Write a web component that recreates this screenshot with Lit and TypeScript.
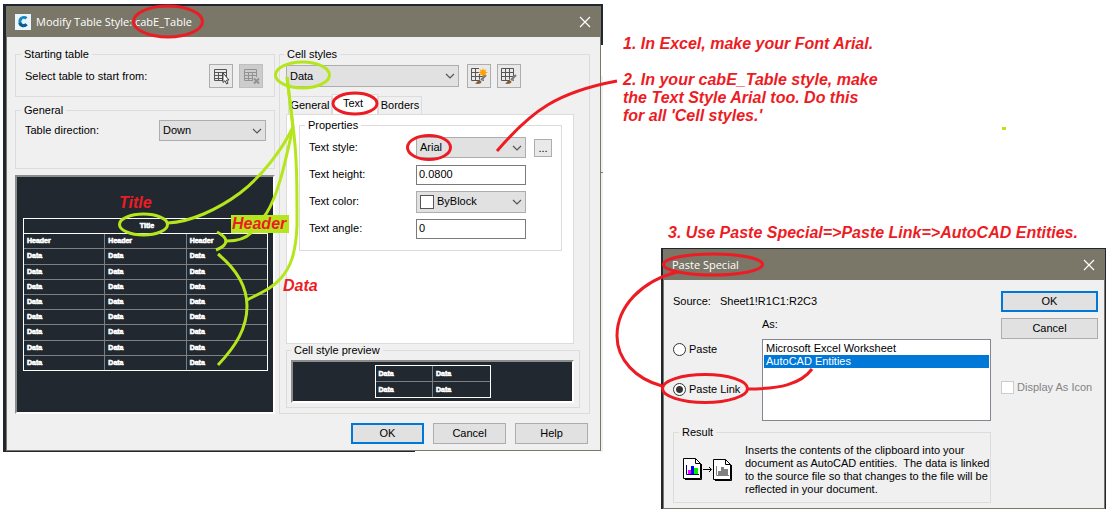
import { LitElement, html, css, svg } from "lit";
import { customElement } from "lit/decorators.js";

const chevron = html`<svg class="chevron" viewBox="0 0 10 6" width="10" height="6" aria-hidden="true">
  <path d="M1 1 L5 5 L9 1" fill="none" stroke="#555" stroke-width="1.2" />
</svg>`;

const closeIcon = html`<svg viewBox="0 0 12 12" width="12" height="12" aria-hidden="true">
  <path d="M1 1 L11 11 M11 1 L1 11" fill="none" stroke="#fff" stroke-width="1.2" />
</svg>`;

const gridLines = svg`<path d="M.5 .5 H12.5 V12.5 H.5 Z M.5 4.5 H12.5 M.5 8.5 H12.5 M4.5 .5 V12.5 M8.5 .5 V12.5"
  fill="none" stroke="currentColor" />`;

const brush = svg`<g>
  <path d="M8 12 L15 6 V9 L10 14 Z" fill="#e1e1e1" />
  <path d="M10 12 L15 7" stroke="#777" stroke-width="2" fill="none" />
  <path d="M4 15.5 C6 15 6 12.5 8.5 12 L10.5 13.8 C10 16 7 16.5 4 15.5 Z" fill="#8a5a2e" />
</g>`;

@customElement("app-root")
export class AppRoot extends LitElement {
  static styles = css`
    :host {
      display: block;
      position: relative;
      min-height: 100vh;
      overflow: hidden;
      background: #fff;
      color: #000;
      font: 11px/13px "Liberation Sans", Arial, sans-serif;
    }
    * { box-sizing: border-box; }
    button, select, input { font: inherit; color: inherit; margin: 0; border-radius: 0; }
    .page {
      display: grid;
      grid-template-columns: minmax(0, 603px) minmax(0, 1fr);
      align-items: start;
    }
    .frame-main {
      margin: 4px 0 0 3px;
      padding: 2px 2px 1px 3px;
      background:
        linear-gradient(#20272f, #20272f) right top / 2px 41px no-repeat,
        linear-gradient(#7a7668, #7a7668) right 168px / 2px 1px no-repeat,
        linear-gradient(transparent 72px, #f0f0f0 72px) right top / 2px 100% no-repeat,
        linear-gradient(#20272f, #20272f) left top / 3px 100% no-repeat,
        linear-gradient(#20272f, #20272f) left top / 100% 2px no-repeat,
        linear-gradient(#20272f, #20272f) left bottom / 412px 1px no-repeat;
    }
    .frame-paste { margin: 6px 0 0 58px; padding: 1px 1px 0 2px; background: #20272f; }
    .window { border: 1px solid #7a7668; background: #f0f0f0; }
    .titlebar {
      display: flex;
      align-items: center;
      height: 30px;
      padding: 0 9px 0 8px;
      background: #7a7668;
      color: #fff;
      font: 11px/16px "Open Sans", "Noto Sans", sans-serif;
    }
    .titlebar h1 { margin: 0; font: inherit; flex: 1; }
    .titlebar .app { margin-right: 5px; display: block; }
    .close { border: 0; background: none; padding: 0; width: 12px; height: 12px; display: block; }
    .body { padding: 11px 10px 6px 8px; }
    .columns { display: grid; grid-template-columns: 260px minmax(0, 1fr); gap: 4px; }
    .left { display: flex; flex-direction: column; }
    fieldset { margin: 0; min-width: 0; border: 1px solid #dcdcdc; padding: 3px 8px 8px 9px; }
    legend { padding: 0 3px; margin-left: -4px; line-height: 13px; }
    .line { display: flex; align-items: center; }
    .grow { flex: 1; }
    .starting { padding-right: 11px; }
    .general { height: 65px; margin: 7px 0 6px; }
    .tool {
      width: 24px; height: 24px; padding: 0;
      border: 1px solid #adadad; background: #e9e9e9; color: #555;
      display: grid; place-items: center;
    }
    .tool + .tool { margin-left: 6px; }
    .tool:disabled { background: #cccccc; color: #929292; border-color: #bfbfbf; }
    .combo { position: relative; display: flex; align-items: center; }
    .combo select {
      appearance: none; width: 100%; height: 21px; padding: 0 18px 0 3px;
      border: 1px solid #adadad; background: #e1e1e1;
    }
    .combo .chevron { position: absolute; right: 4px; top: 8px; pointer-events: none; }
    .combo .swatch {
      position: absolute; left: 4px; top: 4px; width: 14px; height: 14px;
      border: 1px solid #555; background: #fff;
    }
    .combo.color select { height: 22px; padding-left: 20px; }
    .combo.direction { width: 107px; }
    .combo.cell { width: 173px; margin-right: 8px; }
    .combo.cell select { height: 22px; }
    .text {
      width: 100%; height: 20px; padding: 0 2px 1px;
      border: 1px solid #7a7a7a; background: #fff;
    }
    .preview {
      flex: 1; background: #212830; border: 2px solid; color: #fff;
      border-color: #8c8c8c #fff #fff #8c8c8c;
      padding: 41px 5px 0 6px;
    }
    .preview table, .mini table {
      width: 100%; border-collapse: collapse; table-layout: fixed;
      outline: 1px solid #fff; outline-offset: -1px;
      font-size: 7px; line-height: 8px; font-weight: bold;
      -webkit-text-stroke: 0.6px #fff; color: #fff;
    }
    .preview table { height: 153px; }
    td, th { border: 1px solid #7d8083; padding: 0 0 0 3px; height: 15px; text-align: left; }
    th.title { text-align: center; border-color: #fff; }
    .styles { padding: 3px 9px 5px 6px; }
    .styles > legend { margin-left: -2px; }
    .tabs { display: flex; align-items: flex-end; margin: 6px 0 0 2px; }
    .tab {
      height: 18px; width: 44px; padding: 0 0 1px; text-align: center; white-space: nowrap;
      border: 1px solid #dcdcdc; border-bottom: 0; background: #f0f0f0;
    }
    .tab.on { width: 46px; height: 20px; padding: 0 10px 2px 6px; background: #fff; }
    .sheet {
      margin-right: 6px; height: 230px; padding: 4px 11px 0 12px;
      border: 1px solid #dcdcdc; background: #fff;
    }
    .props { padding: 2px 9px 8px; }
    .fields {
      display: grid; grid-template-columns: 107px 110px 26px; grid-auto-rows: 27px;
      align-items: center;
    }
    .fields label { grid-column: 1; }
    .fields .more { margin-left: 8px; }
    .more {
      width: 18px; height: 18px; padding: 0; line-height: 12px;
      border: 1px solid #adadad; background: #e9e9e9;
    }
    .sample { padding: 3px 5px 4px 4px; }
    .sample > legend { margin-left: 0; }
    .mini {
      height: 43px; padding: 3px 0; background: #212830; border: 2px solid;
      border-color: #8c8c8c #fff #fff #8c8c8c;
    }
    .mini table { width: 116px; margin: 0 auto; }
    .mini td { height: 16px; }
    .buttons { display: flex; justify-content: flex-end; gap: 9px; padding: 9px 2px 0 0; }
    .btn {
      width: 73px; height: 21px; padding: 0;
      border: 1px solid #adadad; background: #e1e1e1; text-align: center;
    }
    .btn.primary { border: 2px solid #0078d7; }
    .side { padding-top: 35px; }
    .note { margin: 0 0 18px 20px; }
    .note, .mark {
      font-size: 16px; line-height: 18px; font-weight: bold; font-style: italic; color: #ed1c24;
    }
    .note.third { margin: 99px 0 0 65px; }
    .paste {
      display: grid; grid-template-columns: minmax(0, 1fr) 97px; column-gap: 10px;
      padding: 11px 6px 5px 9px;
    }
    .paste-left { display: flex; flex-direction: column; }
    .paste-right { display: flex; flex-direction: column; gap: 6px; }
    .paste-right .btn { width: 100%; }
    .source { display: flex; margin: 4px 0 10px; gap: 9px; }
    .choice { display: grid; grid-template-columns: 89px minmax(0, 1fr); }
    .radios { display: flex; flex-direction: column; gap: 27px; padding-top: 25px; }
    .check { display: flex; align-items: center; gap: 3px; white-space: nowrap; }
    .check input[type="radio"] {
      appearance: none; width: 13px; height: 13px; border: 1px solid #333;
      border-radius: 50%; background: #fff;
    }
    .check input[type="radio"]:checked {
      background: radial-gradient(circle, #333 0 3px, #fff 4px);
    }
    .check.off { color: #838383; margin-top: 36px; }
    .check.off input {
      appearance: none; width: 13px; height: 13px; border: 1px solid #ccc; background: #fff;
    }
    .list {
      display: block; width: 100%; height: 82px; margin-top: 8px; padding: 2px 1px;
      border: 1px solid #828790; background: #fff; overflow: hidden; outline: 0;
    }
    .list option { padding: 0 2px; min-height: 13px; height: 13px; line-height: 13px; }
    .list option:checked { background: #0078d7 linear-gradient(#0078d7, #0078d7); color: #fff; }
    .result { margin-top: 5px; padding: 5px 4px 6px 9px; }
    .result .line { gap: 13px; white-space: nowrap; }
    .result svg { flex: none; }
    .result p { margin: 0; }
    .marks { position: absolute; left: 0; top: 0; pointer-events: none; }
    .mark { position: absolute; padding: 0 1px; }
    .mark.m-title { left: 118px; top: 194px; }
    .mark.m-header { left: 231px; top: 215px; background: #b5e61d; padding-right: 3px; }
    .mark.m-data { left: 282px; top: 277px; }
  `;

  private renderSamples() {
    const cols = [0, 1, 2];
    return html`<table>
      <tr><th class="title" colspan="3">Title</th></tr>
      <tr>${cols.map(() => html`<th>Header</th>`)}</tr>
      ${Array.from({ length: 8 }, () => html`<tr>${cols.map(() => html`<td>Data</td>`)}</tr>`)}
    </table>`;
  }

  private renderTableStyle() {
    return html`<div class="frame-main"><section class="window">
      <header class="titlebar">
        <svg class="app" viewBox="0 0 16 16" width="16" height="16" aria-hidden="true">
          <rect width="16" height="16" fill="#eaf6fc" />
          <path d="M11.5 4.4 A4 4 0 1 0 11.5 10.4" fill="none" stroke="#1b86bb" stroke-width="3" />
          <path d="M4.6 9 A4 4 0 0 0 11.5 10.4" fill="none" stroke="#0f5c8c" stroke-width="3" />
        </svg>
        <h1>Modify Table Style: cabE_Table</h1>
        <button class="close" aria-label="Close">${closeIcon}</button>
      </header>
      <div class="body">
        <div class="columns">
          <div class="left">
            <fieldset class="starting">
              <legend>Starting table</legend>
              <div class="line">
                <span class="grow">Select table to start from:</span>
                <button class="tool" aria-label="Select table">
                  <svg viewBox="0 0 17 17" width="17" height="17">
                    <path d="M1.5 1.5 H13.5 V12.5 H1.5 Z M1.5 4.5 H13.5 M1.5 7.5 H13.5 M1.5 10.5 H13.5 M5.5 4.5 V12.5 M9.5 4.5 V12.5" fill="none" stroke="currentColor" />
                    <path d="M10 5 V14.5 L12 12.7 L13.6 16 L15 15.3 L13.5 12 H16 Z" fill="#fff" stroke="#333" stroke-width=".9" />
                  </svg>
                </button>
                <button class="tool" aria-label="Remove table" disabled>
                  <svg viewBox="0 0 17 17" width="17" height="17">
                    <path d="M1.5 1.5 H13.5 V12.5 H1.5 Z M1.5 4.5 H13.5 M1.5 7.5 H13.5 M1.5 10.5 H13.5 M5.5 4.5 V12.5 M9.5 4.5 V12.5" fill="none" stroke="currentColor" />
                    <path d="M10 9 H17 V17 H10 Z" fill="#ccc" />
                    <path d="M11 10.5 L16 15.5 M16 10.5 L11 15.5" stroke="currentColor" stroke-width="2" />
                  </svg>
                </button>
              </div>
            </fieldset>
            <fieldset class="general">
              <legend>General</legend>
              <div class="line">
                <label class="grow" for="direction">Table direction:</label>
                <div class="combo direction">
                  <select id="direction"><option>Down</option><option>Up</option></select>${chevron}
                </div>
              </div>
            </fieldset>
            <div class="preview">${this.renderSamples()}</div>
          </div>
          <fieldset class="styles">
            <legend>Cell styles</legend>
            <div class="line">
              <div class="combo cell">
                <select aria-label="Cell styles"><option>Data</option><option>Header</option><option>Title</option></select>${chevron}
              </div>
              <button class="tool" aria-label="Create cell style">
                <svg viewBox="0 0 17 17" width="17" height="17">${gridLines}${brush}
                  <rect x="8" y="0" width="9" height="6" fill="#e9e9e9" />
                  <path d="M12 0 L13 2.4 L15.5 1 L14.3 3.4 L17 4.4 L14.3 5.4 L15.5 8 L13 6.6 L12 9 L11 6.6 L8.5 8 L9.7 5.4 L7 4.4 L9.7 3.4 L8.5 1 L11 2.4 Z" fill="#ffa000" />
                </svg>
              </button>
              <button class="tool" aria-label="Manage cell styles">
                <svg viewBox="0 0 17 17" width="17" height="17">${gridLines}${brush}</svg>
              </button>
            </div>
            <div class="tabs" role="tablist">
              <button class="tab" role="tab">General</button>
              <button class="tab on" role="tab" aria-selected="true">Text</button>
              <button class="tab" role="tab">Borders</button>
            </div>
            <div class="sheet" role="tabpanel">
              <fieldset class="props">
                <legend>Properties</legend>
                <div class="fields">
                  <label for="style">Text style:</label>
                  <div class="combo"><select id="style"><option>Arial</option></select>${chevron}</div>
                  <button class="more" aria-label="Edit text style">...</button>
                  <label for="height">Text height:</label>
                  <input class="text" id="height" value="0.0800" />
                  <label for="color">Text color:</label>
                  <div class="combo color">
                    <select id="color"><option>ByBlock</option></select>
                    <span class="swatch"></span>${chevron}
                  </div>
                  <label for="angle">Text angle:</label>
                  <input class="text" id="angle" value="0" />
                </div>
              </fieldset>
            </div>
            <fieldset class="sample">
              <legend>Cell style preview</legend>
              <div class="mini"><table>
                <tr><td>Data</td><td>Data</td></tr>
                <tr><td>Data</td><td>Data</td></tr>
              </table></div>
            </fieldset>
          </fieldset>
        </div>
        <div class="buttons">
          <button class="btn primary">OK</button>
          <button class="btn">Cancel</button>
          <button class="btn">Help</button>
        </div>
      </div>
    </section></div>`;
  }

  private renderPasteSpecial() {
    return html`<div class="frame-paste"><section class="window">
      <header class="titlebar">
        <h1>Paste Special</h1>
        <button class="close" aria-label="Close">${closeIcon}</button>
      </header>
      <div class="paste">
        <div class="paste-left">
          <div class="source"><span>Source:</span><span>Sheet1!R1C1:R2C3</span></div>
          <div class="choice">
            <div class="radios">
              <label class="check"><input type="radio" name="mode" />Paste</label>
              <label class="check"><input type="radio" name="mode" checked />Paste Link</label>
            </div>
            <div>
              <label for="as">As:</label>
              <select class="list" id="as" size="6">
                <option>Microsoft Excel Worksheet</option>
                <option selected>AutoCAD Entities</option>
              </select>
            </div>
          </div>
          <fieldset class="result">
            <legend>Result</legend>
            <div class="line">
              <svg viewBox="0 0 49 24" width="49" height="24" aria-hidden="true">
                <path d="M.5 .5 H12.5 L17.5 5.5 V20.5 H.5 Z" fill="#fff" stroke="#000" />
                <path d="M12.5 .5 V5.5 H17.5 M2 21.5 H18.5 V6" fill="none" stroke="#000" />
                <path d="M3.5 7 V16.500 H16" fill="none" stroke="#000080" />
                <path d="M5 12 H8 V16 H5 Z" fill="#f0f" />
                <path d="M8 8 H11 V16 H8 Z" fill="#00f" />
                <path d="M11 10 H15 V16 H11 Z" fill="#0e0" />
                <path d="M20 11.500 H28 M26 9 L28.5 11.500 L26 14" fill="none" stroke="#000" />
                <path d="M30.5 1.5 H42.5 L47.5 6.5 V21.5 H30.5 Z" fill="#fff" stroke="#000" />
                <path d="M42.5 1.5 V6.5 H47.5 M32 22.500 H48.5 V7" fill="none" stroke="#000" />
                <path d="M33.5 8 V17.500 H46" fill="none" stroke="#808080" />
                <path d="M35 13 H38 V9 H41 V11 H45 V17 H35 Z" fill="#808080" />
              </svg>
              <p>Inserts the contents of the clipboard into your<br />document as AutoCAD entities.&nbsp; The data is linked<br />to the source file so that changes to the file will be<br />reflected in your document.</p>
            </div>
          </fieldset>
        </div>
        <div class="paste-right">
          <button class="btn primary">OK</button>
          <button class="btn">Cancel</button>
          <label class="check off"><input type="checkbox" disabled />Display As Icon</label>
        </div>
      </div>
    </section></div>`;
  }

  private renderMarks() {
    return html`<svg class="marks" viewBox="0 0 1106 509" width="1106" height="509" fill="none" stroke-width="3" aria-hidden="true">
        <g stroke="#b5e61d">
          <ellipse cx="302.5" cy="75" rx="27" ry="13" />
          <ellipse cx="143.5" cy="224.5" rx="24" ry="10.5" />
          <path d="M287 77 L293 127 C282 150 262 176 240 193 C217 210 190 222 168 223" />
          <path d="M293 127 C286 158 279 194 266 214 L251 233 C245 239 238 241 227 241" />
          <path d="M217 232 C229 238 229 245 216 250" />
          <path d="M287 77 L293 127 C297 155 297 185 297 225 C296 254 290 268 281 278 C272 289 258 294 247 300" />
          <path d="M218 254 C235 268 247 285 247 306 C247 328 236 346 218 365" />
        </g>
        <rect x="1002" y="127" width="4" height="3" fill="#b5e61d" />
        <g stroke="#ed1c24">
          <ellipse cx="168" cy="21.5" rx="34.5" ry="15.5" />
          <ellipse cx="355" cy="103.5" rx="22" ry="10.5" />
          <ellipse cx="429" cy="147.5" rx="21.5" ry="12" />
          <path d="M497 151 C532 110 558 92 617 81" />
          <ellipse cx="713" cy="264.5" rx="49.5" ry="10.5" />
          <ellipse cx="705" cy="388.5" rx="42.5" ry="14" />
          <path d="M677 272 C642 281 617 306 617 336 C617 360 636 379 662 386" />
          <path d="M748 389 C780 389 801 384 812 369" />
        </g>
      </svg>
      <span class="mark m-title">Title</span>
      <span class="mark m-header">Header</span>
      <span class="mark m-data">Data</span>`;
  }

  render() {
    return html`<main class="page">
        ${this.renderTableStyle()}
        <div class="side">
          <p class="note">1. In Excel, make your Font Arial.</p>
          <p class="note">2. In your cabE_Table style, make<br />the Text Style Arial too. Do this<br />for all 'Cell styles.'</p>
          <p class="note third">3. Use Paste Special=&gt;Paste Link=&gt;AutoCAD Entities.</p>
          ${this.renderPasteSpecial()}
        </div>
      </main>
      ${this.renderMarks()}`;
  }
}
